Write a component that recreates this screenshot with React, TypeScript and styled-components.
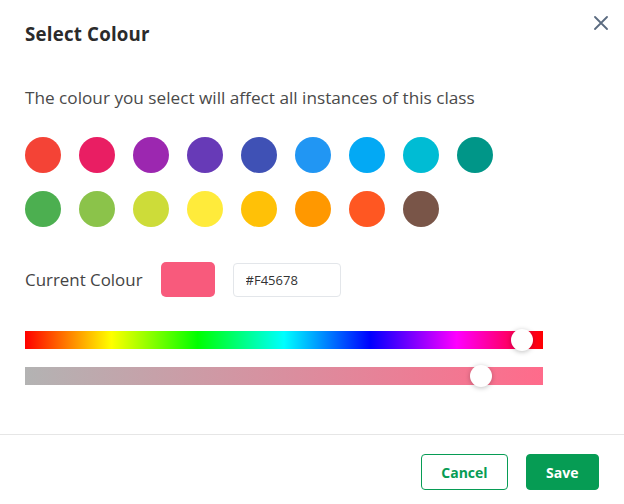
import React, { useState } from 'react';
import styled, { createGlobalStyle } from 'styled-components';

const GlobalStyle = createGlobalStyle`
  html, body {
    margin: 0;
    padding: 0;
    background: #ffffff;
  }
  body {
    font-family: "Open Sans", "Noto Sans", "Liberation Sans", sans-serif;
    -webkit-font-smoothing: antialiased;
  }
`;

const SWATCHES = [
  ['#F44336', '#E91E63', '#9C27B0', '#673AB7', '#3F51B5', '#2196F3', '#03A9F4', '#00BCD4', '#009688'],
  ['#4CAF50', '#8BC34A', '#CDDC39', '#FFEB3B', '#FFC107', '#FF9800', '#FF5722', '#795548'],
];

const Dialog = styled.div`
  position: relative;
  width: 624px;
  height: 504px;
  display: flex;
  flex-direction: column;
  background: #ffffff;
  box-sizing: border-box;
`;

const Header = styled.header`
  display: flex;
  align-items: center;
  height: 70px;
  padding: 0 25px 4px;
  box-sizing: border-box;
`;

const Title = styled.h2`
  margin: 0;
  font-size: 18.7px;
  font-weight: 700;
  color: #2b2b2b;
  letter-spacing: 0.2px;
`;

const CloseButton = styled.button`
  position: absolute;
  top: 12px;
  right: 12px;
  width: 22px;
  height: 22px;
  padding: 0;
  border: none;
  background: transparent;
  display: flex;
  align-items: center;
  justify-content: center;
  cursor: pointer;
`;

const Body = styled.div`
  flex: 1;
  padding: 16px 25px 0;
  display: flex;
  flex-direction: column;
`;

const Description = styled.p`
  margin: 0 0 27px;
  font-size: 17.2px;
  line-height: 24px;
  color: #4a4a4a;
`;

const SwatchGrid = styled.div`
  display: flex;
  flex-direction: column;
  gap: 18px;
`;

const SwatchRow = styled.div`
  display: flex;
  gap: 18px;
`;

const Swatch = styled.button<{ $color: string }>`
  width: 36px;
  height: 36px;
  padding: 0;
  border: none;
  border-radius: 50%;
  background: ${({ $color }) => $color};
  cursor: pointer;
`;

const CurrentRow = styled.div`
  display: flex;
  align-items: center;
  gap: 18px;
  margin-top: 35px;
`;

const CurrentLabel = styled.span`
  font-size: 16.9px;
  color: #444444;
`;

const Preview = styled.div<{ $color: string }>`
  width: 54px;
  height: 35px;
  border-radius: 5px;
  background: ${({ $color }) => $color};
`;

const HexInput = styled.input`
  width: 108px;
  height: 34px;
  box-sizing: border-box;
  padding: 0 12px;
  border: 1px solid #e3e6ea;
  border-radius: 4px;
  font-family: "Open Sans", "Noto Sans", sans-serif;
  font-size: 13px;
  color: #333333;
  outline: none;
`;

const Sliders = styled.div`
  display: flex;
  flex-direction: column;
  gap: 18px;
  margin-top: 34px;
  width: 518px;
`;

const Track = styled.div<{ $background: string }>`
  position: relative;
  height: 18px;
  background: ${({ $background }) => $background};
`;

const Thumb = styled.div`
  position: absolute;
  top: 50%;
  width: 22px;
  height: 22px;
  border-radius: 50%;
  background: #ffffff;
  transform: translate(-50%, -50%);
  box-shadow: 0 1px 5px rgba(0, 0, 0, 0.25);
`;

const Footer = styled.footer`
  display: flex;
  justify-content: flex-end;
  gap: 18px;
  height: 70px;
  padding: 19px 25px 0;
  box-sizing: border-box;
  border-top: 1px solid #e6e6e6;
`;

const Button = styled.button<{ $primary?: boolean }>`
  height: 36px;
  padding: 0 ${({ $primary }) => ($primary ? '19.5px' : '19px')};
  border-radius: 4px;
  border: 1px solid #079c55;
  background: ${({ $primary }) => ($primary ? '#069c54' : '#ffffff')};
  color: ${({ $primary }) => ($primary ? '#ffffff' : '#079c55')};
  font-family: "Open Sans", "Noto Sans", sans-serif;
  font-size: 14px;
  font-weight: 700;
  cursor: pointer;
`;

const HUE = 'linear-gradient(90deg, #ff0000 0%, #ffff00 16.66%, #00ff00 33.33%, #00ffff 50%, #0000ff 66.66%, #ff00ff 83.33%, #ff0000 100%)';
const ALPHA = 'linear-gradient(90deg, #b3b3b3 0%, #ff6b8b 100%)';

export default function App() {
  const [color] = useState('#F45678');

  return (
    <>
      <GlobalStyle />
      <Dialog>
        <Header>
          <Title>Select Colour</Title>
        </Header>
        <CloseButton aria-label="Close">
          <svg width="14" height="14" viewBox="0 0 14 14">
            <path d="M1 1L13 13M13 1L1 13" stroke="#5b6b80" strokeWidth="1.8" strokeLinecap="round" />
          </svg>
        </CloseButton>
        <Body>
          <Description>The colour you select will affect all instances of this class</Description>
          <SwatchGrid>
            {SWATCHES.map((row, i) => (
              <SwatchRow key={i}>
                {row.map((c) => (
                  <Swatch key={c} $color={c} aria-label={c} />
                ))}
              </SwatchRow>
            ))}
          </SwatchGrid>
          <CurrentRow>
            <CurrentLabel>Current Colour</CurrentLabel>
            <Preview $color="#F85A7C" />
            <HexInput defaultValue={color} />
          </CurrentRow>
          <Sliders>
            <Track $background={HUE}>
              <Thumb style={{ left: `${(497 / 518) * 100}%` }} />
            </Track>
            <Track $background={ALPHA}>
              <Thumb style={{ left: `${(455.5 / 518) * 100}%` }} />
            </Track>
          </Sliders>
        </Body>
        <Footer>
          <Button>Cancel</Button>
          <Button $primary>Save</Button>
        </Footer>
      </Dialog>
    </>
  );
}
